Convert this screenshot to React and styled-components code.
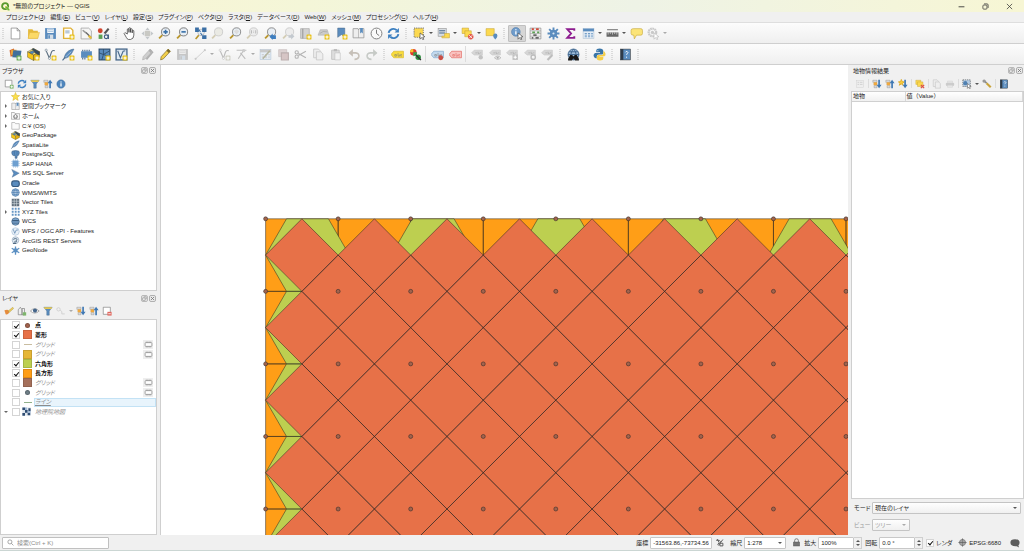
import React from "react";
import styled, { createGlobalStyle, css } from "styled-components";

const Global = createGlobalStyle`
  *, *::before, *::after { box-sizing: border-box; }
  html, body, #root { height: 100%; }
  body {
    margin: 0;
    background: #f0f0f0;
    color: #1c1c1c;
    font-family: "Liberation Sans", "Noto Sans CJK JP", sans-serif;
    font-size: 6px;
    line-height: 8px;
    font-feature-settings: "palt";
  }
  button, input, select { font: inherit; color: inherit; font-feature-settings: inherit; }
`;

/* ---------- icon drawings (24 x 24 grid) ---------- */

const BLUE = "#5a8cbe";
const DARK = "#4a6a8c";
const GREY = "#8a8a8a";
const PALE = "#c9c9c9";
const YEL = "#fcd94f";

const Plus = ({ fill = "#e9c21c" }) => (
  <g>
    <rect x="14" y="14" width="9" height="9" rx="1" fill={fill} />
    <path d="M18.5 15.5v6M15.5 18.5h6" stroke="#fff" strokeWidth="2" />
  </g>
);
const Lens = ({ c = "#666", handle = "#b9962c", fill = "#e8eef4", children }) => (
  <g>
    <path d="M8 15l-6 6" stroke={handle} strokeWidth="3.5" />
    <circle cx="14" cy="9" r="7.5" fill={fill} stroke={c} strokeWidth="1.5" />
    {children}
  </g>
);
const Label = ({ fill, stroke, ink = "#777" }) => (
  <g>
    <path d="M0 12l5-6h18v12H5z" fill={fill} stroke={stroke} strokeWidth="1.2" />
    <path d="M7 12h3v3H7zM13 9v6h3v-3M20 12h-2v3h2" fill="none" stroke={ink} strokeWidth="1" />
  </g>
);
const PaleLabel = ({ children }) => (
  <g>
    <path d="M1 9l5-5h15v9H6z" fill="#d6d6d6" stroke="#c4c4c4" />
    <path d="M8 9h3M13 7v3h3M18 10V8" fill="none" stroke="#aaa" strokeWidth="1.3" />
    {children}
  </g>
);
const Book = ({ c = BLUE }) => (
  <g>
    <rect x="3" y="2" width="18" height="20" fill={c} stroke="#333" />
    <rect x="3" y="2" width="5" height="20" fill="#2f3b48" />
  </g>
);
const Table = ({ c = BLUE }) => (
  <g>
    <rect x="2" y="3" width="20" height="18" fill="#e6eef6" stroke="#a9bdd1" />
    <path d="M2 3h20v5H2z" fill={c} />
    <path d="M5 12h4M11 12h4M17 12h3M5 15h4M11 15h4M17 15h3M5 18h4M11 18h4M17 18h3" stroke={c} strokeWidth="1.5" />
  </g>
);
const Gear = ({ c }) => (
  <g stroke={c} strokeWidth="3.5">
    <path d="M12 1v22M1 12h22M4 4l16 16M20 4L4 20" />
    <circle cx="12" cy="12" r="5" fill={c} />
    <circle cx="12" cy="12" r="2" fill="#dce8f3" stroke="none" />
  </g>
);
const Globe = ({ c = BLUE, fill = "#dfe9f2" }) => (
  <g fill="none" stroke={c} strokeWidth="1.8">
    <circle cx="12" cy="12" r="10" fill={fill} />
    <path d="M2 12h20M12 2c-6 6-6 14 0 20M12 2c6 6 6 14 0 20M4 7h16M4 17h16" />
  </g>
);
const Refresh = ({ c = "#3c7fc0" }) => (
  <g fill="none" stroke={c} strokeWidth="3.5">
    <path d="M3 11a9 9 0 0 1 15-5M21 13a9 9 0 0 1-15 5" />
    <path d="M22 2v8h-8zM2 22v-8h8z" fill={c} stroke="none" />
  </g>
);
const V = ({ c = "#5c6f80" }) => (
  <g>
    <path d="M4 5l6 14 4-12q2-3 6-2" fill="none" stroke={c} strokeWidth="2" />
    <circle cx="4" cy="4" r="2" fill="#fff" stroke={c} />
    <circle cx="10" cy="19" r="2" fill="#fff" stroke={c} />
  </g>
);
const Pencil = ({ c = YEL, s = "#7c6a2a" }) => (
  <g>
    <path d="M17 2l4 4L8 20l-5 2 1-6z" fill={c} stroke={s} strokeWidth="1.3" />
    <path d="M17 2l4 4-3 3-4-4z" fill={s} />
  </g>
);
const Feather = () => (
  <g>
    <path d="M22 2C12 3 5 10 4 19c8 0 13-6 18-17z" fill={BLUE} stroke={DARK} />
    <path d="M4 19L17 7" stroke="#dce8f3" strokeWidth="1" />
    <path d="M1 23l5-6" stroke={DARK} strokeWidth="2" />
  </g>
);
const Cube = () => (
  <g stroke="#4c4c30" strokeWidth="0.8">
    <path d="M12 1l11 6-11 6L1 7z" fill="#f7e27a" />
    <path d="M1 7l11 6v10L1 17z" fill="#f5c518" />
    <path d="M23 7l-11 6v10l11-6z" fill="#e2ad12" />
    <path d="M9 2l3-1 11 6v6l-4-1-5-4z" fill="#33495f" />
    <path d="M4 8l6-3 4 3-5 3z" fill="#4f86bd" />
  </g>
);
const Info = ({ r = 10 }) => (
  <g>
    <circle cx="12" cy="12" r={r} fill="#4f86bd" stroke="#3e6a96" />
    <path d="M12 10v8M12 6v2.5" stroke="#fff" strokeWidth="3" />
  </g>
);
const Collapse = ({ up }) => (
  <g>
    <path d="M2 3h10v5H2zM5 9h7v5H5zM5 16h7v5H5z" fill="#ddd" stroke="#8b8b8b" />
    <path d="M4 8h8v7H4z" fill="#f2a93c" />
    {up ? (
      <path d="M17 2l6 8h-4v12h-4V10h-4z" fill="#3f78b3" />
    ) : (
      <path d="M17 22l6-8h-4V2h-4v12h-4z" fill="#3f78b3" />
    )}
  </g>
);
const Cursor = ({ c = "#444" }) => <path d="M13 11l9 7-4 .5 2 4-2 1-2-4-3 3z" fill="#fff" stroke={c} strokeWidth="1.2" />;
const Sheet = ({ c = "#777" }) => <path d="M4 2h11l5 5v15H4zM15 2v5h5" fill="#fff" stroke={c} strokeWidth="1.2" />;
const Floppy = ({ c = BLUE, p = "#fff" }) => (
  <g>
    <path d="M2 2h20v20H2z" fill={c} />
    <path d="M6 3h12v8H6z" fill={p} />
    <path d="M7 5h10M7 8h10" stroke={c} />
    <path d="M7 14h10v8H7z" fill="#d4dde6" />
    <path d="M8 15h3v6H8z" fill={c} />
  </g>
);
const Funnel = () => (
  <g>
    <path d="M2 3h20l-7 9v10H9V12z" fill={BLUE} stroke={DARK} />
    <path d="M2 3h20l-2 4H4z" fill="#e8c850" />
  </g>
);

const art = {
  new: <Sheet />,
  open: <g><path d="M2 4h8l2 3h8v14H2z" fill="#e4b93c" /><path d="M5 10h18l-3 11H2z" fill="#fbd966" stroke="#e0b440" /></g>,
  save: <Floppy />,
  layoutNew: <g><path d="M3 2h13l4 4v15H3z" fill="#fff" stroke="#e0b23a" strokeWidth="2.5" /><path d="M6 6h8v6H6z" fill="#b9c9d8" /><Plus /></g>,
  layouts: <g><path d="M2 2h14l5 5v15H2z" fill="#f5f5f5" stroke="#999" strokeWidth="1.3" /><path d="M5 6l6 5" stroke="#999" strokeWidth="3" /><path d="M11 10l9 9" stroke="#666" strokeWidth="2.5" /><path d="M16 16l5 5" stroke="#e3bc3c" strokeWidth="4" /></g>,
  style: <g><circle cx="6" cy="7" r="4.5" fill="#d0452f" /><path d="M12 11l8-9 3 2-7 9z" fill="#555" /><rect x="3" y="14" width="7" height="8" fill="#5aa055" /><circle cx="17" cy="18" r="3.5" fill="none" stroke="#3c5a80" strokeWidth="2" /><path d="M21 14v8" stroke="#3c5a80" strokeWidth="2" /></g>,
  hand: <path d="M8 13V4q1.500-2 3 0v6-8q1.500-1.500 3 0v8-6q1.500-1.500 3 0v7-4q1.500-1.500 3 0v8q0 7-6 8h-4q-3-1-4-4L2 12q1-2 3-1z" fill="#fff" stroke="#333" strokeWidth="1.3" />,
  panSel: <g fill="#c3c7ca"><path d="M12 1l4 5H8zM12 23l4-5H8zM1 12l5-4v8zM23 12l-5-4v8z" /><rect x="7" y="7" width="10" height="10" fill="#c9c9c4" /></g>,
  zoomIn: <Lens><path d="M14 5v8M10 9h8" stroke="#3870a8" strokeWidth="3" /></Lens>,
  zoomOut: <Lens><path d="M10 9h8" stroke="#3870a8" strokeWidth="3" /></Lens>,
  zoomFull: <g><path d="M9 15l-6 7" stroke="#b9962c" strokeWidth="3" /><circle cx="13" cy="10" r="6" fill="#e8eef4" stroke="#999" /><path d="M2 1h7v8H2zM15 1h8v8h-8zM15 15h8v7h-8z" fill="#3b6fa5" /><path d="M9 5l3 4M15 15l-3-4" stroke="#3b6fa5" strokeWidth="2" /></g>,
  zoomSel: <Lens c="#c6c6c6" handle="#d4cdb4" fill="#eaeae4" />,
  zoomLayer: <Lens c="#777"><path d="M9 8l5-4 5 4-5 6z" fill="#ddd" /></Lens>,
  zoomNative: <Lens c="#c6c6c6" handle="#d4cdb4" fill="#ececec"><path d="M10 6v6M14 7v1M14 10v1M18 6v6" stroke="#aaa" strokeWidth="1.5" /></Lens>,
  zoomLast: <g><Lens c="#777" /><path d="M22 12v10h-6v2l-6-6 6-6v3h6z" fill="#3f7fc0" /></g>,
  zoomNext: <g><Lens c="#c9c9c9" handle="#d4cdb4" fill="#ececec" /><path d="M12 15h5v-3l6 5-6 6v-3h-5z" fill="#c3c9cf" /></g>,
  mapView: <g><path d="M3 3h16v18H3z" fill="#d2d2d2" stroke="#999" /><path d="M7 3v18" stroke="#999" strokeWidth="2" /><Plus /></g>,
  map3d: <g><path d="M6 5h13l3 10H2z" fill="#ccc" stroke="#aaa" /><path d="M5 12q6-6 14-3" fill="none" stroke="#999" /><Plus /></g>,
  bookmarkNew: <g><path d="M5 2h13v17l-6-5-7 5z" fill={BLUE} stroke={DARK} /><Plus /></g>,
  bookmarks: <g><path d="M2 3h9l1 2 1-2h9v17H2z" fill="#eee" stroke="#999" strokeWidth="1.5" /><path d="M12 4v16" stroke="#999" /><path d="M15 2h5v10l-2.5-2.5L15 12z" fill={BLUE} /></g>,
  clock: <g><circle cx="12" cy="12" r="10" fill="#fafafa" stroke="#808080" strokeWidth="1.8" /><path d="M12 5v7l5 4" fill="none" stroke="#777" strokeWidth="1.8" /></g>,
  refresh: <Refresh />,
  select: <g><path d="M2 2h17v17H2z" fill={YEL} stroke="#777" strokeDasharray="2 2" strokeWidth="2" /><Cursor /></g>,
  selectValue: <g><rect x="2" y="3" width="15" height="14" fill="#d8dde2" stroke="#888" /><path d="M4 7h11M4 11h11" stroke={DARK} strokeWidth="2" /><path d="M14 12h9v8H9v-3h5z" fill={YEL} stroke="#c4a233" /></g>,
  deselect: <g><path d="M2 2h12v10H2z" fill={YEL} stroke="#c4a233" /><path d="M7 7h12v11H7z" fill={YEL} stroke="#c4a233" /><circle cx="18" cy="18" r="5" fill="#e2574c" /><path d="M15 15l6 6M21 15l-6 6" stroke="#fff" strokeWidth="1.5" /></g>,
  selectLoc: <g><path d="M2 3h15v13H2z" fill={YEL} stroke="#c4a233" /><path d="M19 12q4 0 4 4 0 3-4 7-4-4-4-7 0-4 4-4z" fill={BLUE} /></g>,
  identify: <g><circle cx="9" cy="9" r="8" fill="#6f9ccb" stroke="#4a78a8" /><path d="M9 8v6M9 4v2" stroke="#fff" strokeWidth="2.5" /><Cursor /></g>,
  calc: <g><path d="M2 2h20v20H2z" fill="#eee" stroke="#888" strokeWidth="1.2" /><path d="M2 7h20M2 12h20M2 17h20" stroke="#999" /><path d="M5 4h4M13 4h5" stroke="#d04a3a" strokeWidth="3" /><path d="M6 10h5M15 10h4" stroke="#59a052" strokeWidth="3" /><path d="M5 20h3M12 20h6M8 15h6" stroke="#666" strokeWidth="3" /></g>,
  gear: <Gear c={BLUE} />,
  sigma: <path d="M19 7V4H6l7 8-7 8h13v-3" fill="none" stroke="#8d1c8f" strokeWidth="3.5" />,
  table: <Table />,
  measure: <g><path d="M2 5h20" stroke="#777" strokeWidth="2" /><rect x="1" y="10" width="22" height="8" fill="#666" /><path d="M4 10v4M8 10v3M12 10v4M16 10v3M20 10v4" stroke="#fff" /></g>,
  tips: <path d="M6 3h14q3 0 3 3v6q0 3-3 3h-8l-4 7-1-7H6q-4 0-4-3V6q0-3 4-3z" fill="#fbe478" stroke="#c9aa3c" strokeWidth="1.2" />,
  action: <g><circle cx="10" cy="10" r="7" fill="none" stroke={PALE} strokeWidth="4" strokeDasharray="3 1" /><circle cx="10" cy="10" r="3" fill={PALE} /><Cursor c="#bbb" /></g>,
  source: <g><path d="M1 4l8-3 3 12-9 3z" fill="#d1662f" /><path d="M4 3l10 0-2 12-9-3z" fill="#e8a33c" /><path d="M8 4l15 1-2 13-15-1z" fill="#416f9c" /><Plus fill="#6fae5a" /></g>,
  gpkg: <g><Cube /><Plus /></g>,
  shp: <g><V /><Plus /></g>,
  spatial: <g><Feather /><Plus /></g>,
  memory: <g><rect x="2" y="6" width="20" height="12" fill={BLUE} /><path d="M5 3v3M9 3v3M13 3v3M17 3v3M5 18v3M9 18v3" stroke={DARK} strokeWidth="2" /><Plus /></g>,
  mesh: <g><rect x="2" y="2" width="20" height="20" fill={BLUE} stroke="#2c4a68" strokeWidth="2" /><path d="M2 9l8 3 12-7M10 12l-3 10M10 12l12 4M10 2v10" fill="none" stroke="#2c4a68" strokeWidth="1.5" /><Plus /></g>,
  virtual: <g><rect x="2" y="2" width="20" height="20" fill="#dfe9f2" stroke={DARK} strokeWidth="2.5" /><path d="M5 5l5 13 5-12 4-1" fill="none" stroke={DARK} strokeWidth="2" /><Plus /></g>,
  edits: <g><Pencil c="#cfcfcf" s="#b0b0b0" /><path d="M10 21l12-14" stroke="#b0b0b0" strokeWidth="3" /></g>,
  edit: <Pencil c="#f3d04a" />,
  saveEdit: <Floppy c="#c6c6c6" p="#eee" />,
  line: <g><path d="M3 20L20 4" stroke={PALE} strokeWidth="1.5" /><circle cx="3" cy="20" r="2" fill={PALE} /><circle cx="20" cy="4" r="2" fill={PALE} /></g>,
  addFeat: <g><V c="#bbb" /><Plus fill="#d2d2c8" /></g>,
  vertex: <g><path d="M3 4h18M6 20L16 4M10 9l9 11" stroke="#bdbdbd" strokeWidth="2" fill="none" /><circle cx="16" cy="5" r="3" fill="#ccc" /></g>,
  attrs: <g><Table c="#c9c9c9" /><path d="M7 20L20 5" stroke="#b5b59f" strokeWidth="3" /></g>,
  trash: <g><path d="M3 3h15v13H3z" fill="#dcd2d2" stroke="#c0b6b6" /><path d="M8 9h13v13H8z" fill="#d6c5c5" stroke="#bbaeae" strokeWidth="2" /></g>,
  cut: <g stroke="#b4b4b4" strokeWidth="2" fill="none"><path d="M22 6L8 14M22 18L8 10" /><circle cx="5" cy="8" r="3" /><circle cx="5" cy="16" r="3" /></g>,
  copy: <g><path d="M3 2h9l4 4v12H3z" fill="#eee" stroke="#c6c6c6" strokeWidth="1.5" /><path d="M8 7h8l4 4v11H8z" fill="#eee" stroke="#c6c6c6" strokeWidth="1.5" /></g>,
  paste: <g><path d="M3 4h14v17H3z" fill="#ddd" stroke="#c2c2c2" strokeWidth="1.5" /><path d="M9 9h10v13H9z" fill="#f3f3f3" stroke="#bbb" /><path d="M7 2h6v4H7z" fill="#bbb" /></g>,
  undo: <g><path d="M3 9h11q7 1 6 7-1 5-8 5" fill="none" stroke="#c6c0b8" strokeWidth="3" /><path d="M1 9l8-7v14z" fill="#c6c0b8" /></g>,
  redo: <g><path d="M21 9H10q-7 1-6 7 1 5 8 5" fill="none" stroke="#c6cac6" strokeWidth="3" /><path d="M23 9l-8-7v14z" fill="#c6cac6" /></g>,
  label: <Label fill="#f9dc3c" stroke="#d8b728" />,
  diagram: <g><circle cx="8" cy="8" r="6" fill="#e03a2e" /><path d="M8 8V2a6 6 0 0 0-6 6z" fill="#f4c82b" /><path d="M8 8h7a7 7 0 0 1-7 7z" fill="#36a04a" /><circle cx="17" cy="17" r="5" fill="#2e8f3f" /><path d="M12 12l10 10" stroke="#333" strokeWidth="2.5" /></g>,
  labelPin: <g><Label fill="#c3d9ee" stroke="#7aa3cb" /><circle cx="18" cy="18" r="4.5" fill="#c94e45" /></g>,
  labelRed: <Label fill="#f9c3c0" stroke="#e2605a" ink="#e2605a" />,
  pl1: <PaleLabel><circle cx="18" cy="17" r="4" fill="#c2c2c2" /></PaleLabel>,
  pl2: <PaleLabel><path d="M10 18q6-6 12 0-6 6-12 0z" fill="#eee" stroke="#b5b5b5" strokeWidth="1.5" /><circle cx="16" cy="18" r="2" fill="#aaa" /></PaleLabel>,
  pl3: <PaleLabel><rect x="12" y="12" width="10" height="10" fill="#c2c2c2" /><path d="M17 14v6M14 17h6" stroke="#fff" strokeWidth="2" /></PaleLabel>,
  pl4: <PaleLabel><circle cx="17" cy="17" r="4" fill="none" stroke="#bcbcbc" strokeWidth="2.5" /></PaleLabel>,
  pl5: <PaleLabel><path d="M12 22l9-9" stroke="#bdbdbd" strokeWidth="4" /></PaleLabel>,
  metasearch: <g><Globe c="#41678e" fill="#9dbbd8" /><path d="M6 13h4l1 2h2l1-2h4l4 7v3h-7l-2-3h-2l-2 3H2v-3z" fill="#181818" /></g>,
  python: <g><path d="M12 1q-6 0-6 4v3h7v1H4q-3 1-3 5t4 5h2v-4q0-3 4-3h5q3 0 3-3V6q0-5-7-5z" fill="#3a76a8" /><path d="M13 23q6 0 6-4v-3h-7v-1h9q3-1 2-5-1-4-4-4v4q0 3-4 3h-5q-3 0-3 3v3q0 4 6 4z" fill="#f6ce46" /><circle cx="9" cy="5" r="1" fill="#fff" /></g>,
  help: <g><Book /><path d="M12 8q1-2 3-1.500 3 1.500 0 4l-1 2M14 16v2" fill="none" stroke="#fff" strokeWidth="1.8" /></g>,
  addLayer: <g><path d="M3 3h16v16H3z" fill="#fff" stroke="#777" strokeWidth="1.5" /><rect x="14" y="14" width="9" height="9" fill="#7db56c" /><path d="M18.5 15.5v6M15.5 18.5h6" stroke="#fff" strokeWidth="2" /></g>,
  funnel: <Funnel />,
  collapse: <Collapse up />,
  expand: <Collapse />,
  info: <Info />,
  star: <path d="M12 1l3 8 8 .5-6 5 2 8-7-4.5-7 4.5 2-8-6-5L9 9z" fill="#fbe04a" stroke="#d1a820" strokeWidth="1.2" />,
  home: <g><path d="M1 4h8l2 3h12v15H1z" fill="#f7f7f7" stroke="#888" strokeWidth="1.5" /><path d="M6 14l6-5 6 5M8 13v6h8v-6" fill="none" stroke="#555" strokeWidth="2" /></g>,
  folder: <path d="M2 4h8l2 3h10v15H2z" fill="#fbfbfb" stroke="#999" strokeWidth="1.5" />,
  cube: <Cube />,
  feather: <Feather />,
  pg: <g><path d="M3 3q9-3 18 0 3 4-1 11l-4 2v6h-5v-7q-6 1-8-3-2-5 0-9z" fill={BLUE} stroke="#365a80" strokeWidth="1.5" /><path d="M9 3v10M16 4v10" stroke="#365a80" /></g>,
  hana: <g><rect x="4" y="4" width="16" height="16" fill="#6d9fd0" /><path d="M7 1v22M12 1v22M17 1v22M1 7h22M1 12h22M1 17h22" stroke="#6d9fd0" strokeWidth="1.5" strokeDasharray="3 16" /></g>,
  mssql: <path d="M2 1l20 10L3 22l4-10z" fill={BLUE} stroke={DARK} />,
  oracle: <rect x="2" y="5" width="20" height="15" rx="6" fill={BLUE} stroke="#365a80" strokeWidth="3" />,
  wms: <Globe c="#4a7cae" fill="#b4cbe2" />,
  vtiles: <g><rect x="2" y="2" width="20" height="20" fill="#5f6d7b" /><path d="M2 8.500h20M2 15h20M8.500 2v20M15 2v20" stroke="#dde4ea" strokeWidth="1.5" /></g>,
  xyz: <path d="M2 2h5v5H2zM10 2h5v5h-5zM18 2h5v5h-5zM2 10h5v5H2zM10 10h5v5h-5zM18 10h5v5h-5zM2 18h5v5H2zM10 18h5v5h-5zM18 18h5v5h-5z" fill="#6595c4" />,
  wcs: <g><circle cx="12" cy="12" r="10" fill="#7ba3cb" stroke="#4d6e90" strokeWidth="2" /><path d="M3 8h18v3H3zM3 15h18v2H3z" fill="#3d5e80" /></g>,
  wfs: <g><circle cx="12" cy="12" r="10" fill="#eaf1f8" stroke="#9fb9d3" strokeWidth="1.5" /><path d="M6 6l4 11 4-9h5" fill="none" stroke="#5d86af" strokeWidth="2" /></g>,
  arcgis: <g><circle cx="12" cy="11" r="9" fill="#dfe8f1" stroke="#9db0c4" strokeWidth="2" /><path d="M6 9q6-5 11 0M5 20h9M14 10v6H8" stroke="#4b6680" strokeWidth="2.5" fill="none" /></g>,
  geonode: <g stroke="#5b8fc2" strokeWidth="3.5"><path d="M12 1v22M2 6l20 12M22 6L2 18" /><circle cx="12" cy="12" r="4" fill="#5b8fc2" /></g>,
  brush: <g><path d="M1 10q8-2 10 0l2 5q-4 7-9 5z" fill="#e58c3d" /><path d="M10 12L21 3l2 3-10 9z" fill="#f0cf58" stroke="#a08a3a" /></g>,
  addGroup: <g><path d="M3 21V9l5-6 4 6v12zM12 21V6h6v15z" fill="#eee" stroke="#777" strokeWidth="1.5" /><rect x="14" y="15" width="8" height="8" fill="#7db56c" /></g>,
  eye: <g><path d="M1 12q10-11 21 0-11 10-21 0z" fill="#fff" stroke="#999" strokeWidth="2" /><circle cx="12" cy="11" r="5" fill="#44658a" /></g>,
  expr: <g><circle cx="6" cy="8" r="4" fill="none" stroke="#ccc" strokeWidth="2" /><path d="M10 10q6 2 4 9h7" fill="none" stroke="#ccc" strokeWidth="2" /></g>,
  remove: <g><path d="M3 3h17v17H3z" fill="#fff" stroke="#777" strokeWidth="1.5" /><rect x="13" y="14" width="10" height="9" fill="#e0675e" /><path d="M15 18.500h6" stroke="#fff" strokeWidth="2" /></g>,
  form: <g><rect x="3" y="3" width="18" height="18" fill="#eee" stroke="#ccc" /><path d="M6 8h4M6 13h4M12 8h6M12 13h6" stroke="#ccc" strokeWidth="2" /></g>,
  expandNew: <g><path d="M8 1l2 5 5 1-4 3 1 5-4-3-5 3 2-5-4-3 5-1z" fill="#f8cb3a" stroke="#dba928" strokeWidth="2" /><path d="M17 22l6-8h-4V2h-4v12h-4z" fill="#3f78b3" /></g>,
  clear: <g><path d="M2 3h12v10H2z" fill={YEL} stroke="#c4a233" /><path d="M6 7h13v11H6z" fill={YEL} stroke="#c4a233" /><path d="M14 14l8 8M22 14l-8 8" stroke="#dd5248" strokeWidth="3" /></g>,
  printer: <g><rect x="2" y="9" width="20" height="8" rx="3" fill="#ccc" /><path d="M6 5h12v4H6zM6 15h12v5H6z" fill="#e9e9e9" stroke="#ccc" /></g>,
  idMode: <g><path d="M2 2h18v16H2z" fill="#b3cbe3" stroke="#777" strokeWidth="2" strokeDasharray="3 2" /><circle cx="8" cy="10" r="5" fill="#4f80b1" /><Cursor /></g>,
  wrench: <g><path d="M4 3l7 7" stroke="#888" strokeWidth="4" /><circle cx="5" cy="5" r="4" fill="#999" /><path d="M11 10l10 10" stroke="#c9a339" strokeWidth="5" /></g>,
  extents: <g stroke="#555" strokeWidth="2.5" fill="none"><path d="M3 6h8l4 4M6 3l5 9-4 6M21 4L9 20M13 14h8v7h-8z" /></g>,
  lock: <g><path d="M7 11V7q0-5 5-5t5 5v4" fill="none" stroke="#777" strokeWidth="2.5" /><rect x="3" y="10" width="18" height="12" rx="1" fill="#666" /><path d="M3 14h18M3 18h18" stroke="#999" /></g>,
  crs: <g><circle cx="12" cy="12" r="8" fill="#999" stroke="#666" strokeWidth="2" /><path d="M1 12h22M12 1v22" stroke="#666" strokeWidth="2" /><path d="M5 8h14M5 16h14" stroke="#ddd" /></g>,
  bubble: <path d="M12 3q11 0 11 8 0 5-3 7l2 5-6-3q-15 1-15-9 0-8 11-8z" fill="#5b5b5b" />,
  magnifier: <g fill="none" stroke="#888" strokeWidth="2.5"><circle cx="10" cy="10" r="7" /><path d="M15 15l7 7" /></g>,
  chip: <g><rect x="3" y="7" width="18" height="10" rx="2" fill="#fff" stroke={GREY} strokeWidth="2" /><path d="M6 4v3M10 4v3M14 4v3M18 4v3M6 17v3M10 17v3M14 17v3M18 17v3" stroke={GREY} strokeWidth="1.5" /></g>,
  raster: <g><rect x="1" y="1" width="22" height="22" fill="#dfe6ee" /><path d="M1 1h7v7H1zM8 8h7v7H8zM17 3h6v8h-6zM1 16h7v7H1zM15 15h7v7h-7z" fill="#2f4d73" /><path d="M8 1h5v7H8zM15 11h8v4h-8z" fill="#9db8d6" /></g>,
  qgis: <g><circle cx="11" cy="11" r="8" fill="none" stroke="#5a9a2c" strokeWidth="5" /><path d="M11 11h5l7 8v4h-4l-8-8z" fill="#6fb52f" stroke="#fff" /><path d="M11 11h4l-4 4z" fill="#f0c020" /></g>,
  undock: <g fill="none" stroke="#888" strokeWidth="2"><rect x="2" y="2" width="20" height="20" rx="4" /><rect x="6" y="10" width="8" height="8" /><path d="M10 9V6h8v8h-3" /></g>,
  closeBox: <g fill="none" stroke="#777" strokeWidth="2"><rect x="2" y="2" width="20" height="20" rx="4" /><path d="M7 7l10 10M17 7L7 17" strokeWidth="3" /></g>,
  winMin: <path d="M2 13h20" stroke="#333" strokeWidth="3" />,
  winMax: <g fill="none" stroke="#333" strokeWidth="2.5"><rect x="3" y="7" width="14" height="14" rx="3" /><path d="M7 3h10q4 0 4 4v10" /></g>,
  winClose: <path d="M3 3l18 18M21 3L3 21" stroke="#333" strokeWidth="2.5" />,
};

const Svg = styled.svg`
  display: block;
  flex: none;
  width: ${(p) => p.$s}px;
  height: ${(p) => p.$s}px;
`;
const Icon = ({ name, size = 13 }) => (
  <Svg $s={size} viewBox="0 0 24 24" aria-hidden="true">{art[name]}</Svg>
);

/* ---------- window frame ---------- */

const Window = styled.div`
  display: flex;
  flex-direction: column;
  height: 100vh;
  overflow: hidden;
  background: #f0f0f0;
  border-bottom: 1px solid #cbd6d3;
`;
const TitleBar = styled.header`
  display: flex;
  align-items: center;
  flex: none;
  gap: 3px;
  height: 12px;
  padding: 0 9px 0 1px;
  background: linear-gradient(90deg, #faf5d4, #f4f6d8 30%, #eef3e6 62%, #f7f6d4);
`;
const Title = styled.h1`
  flex: 1;
  margin: 0;
  font-size: 6px;
  font-weight: 400;
`;
const BareButton = styled.button`
  display: grid;
  place-items: center;
  padding: 0;
  border: 0;
  background: none;
`;
const WindowButtons = styled.div`
  display: flex;
  gap: 12px;
  ${BareButton} { width: 12px; height: 12px; }
`;
const MenuBar = styled.nav`
  display: flex;
  align-items: center;
  flex: none;
  gap: 1px;
  height: 11px;
  padding: 0 4px;
  background: #f0f0f0;
  border-bottom: 1px solid #dedede;
`;
const MenuItem = styled.button`
  padding: 0 2px;
  border: 0;
  background: none;
  line-height: 9px;
  white-space: nowrap;
`;

/* ---------- tool bars ---------- */

const ToolBar = styled.div`
  display: flex;
  align-items: center;
  flex: none;
  height: 21px;
  background: linear-gradient(#fcfcfc, #efefef);
  border-bottom: 1px solid #cfcfcf;
`;
const Handle = styled.span`
  display: grid;
  place-items: center;
  flex: none;
  width: 8px;
  height: 13px;
  &:first-child { width: 6px; }
  &::before {
    content: "";
    width: 2px;
    height: 11px;
    background: repeating-linear-gradient(#dadada 0 1px, transparent 1px 2px);
  }
`;
const Divider = styled.span`
  flex: none;
  width: 1px;
  height: ${(p) => (p.$small ? 9 : 16)}px;
  margin: 0 ${(p) => (p.$small ? 0 : 2)}px;
  background: #dcdcdc;
`;
const Group = styled.div`
  display: flex;
  align-items: center;
  flex: none;
  width: ${(p) => p.$w}px;
`;
const ToolButton = styled.button`
  display: flex;
  align-items: center;
  gap: 3px;
  flex: 0 1 ${(p) => (p.$menu ? 24 : 18)}px;
  min-width: 0;
  height: 17px;
  padding: 0 2px;
  border: 1px solid transparent;
  background: none;
  ${(p) => p.$on && css`
    border-color: #c0c0c0;
    background: #d6d6d6;
    border-radius: 1px;
  `}
`;
const Caret = styled.span`
  flex: none;
  border: 2px solid transparent;
  border-top-color: ${(p) => (p.$pale ? "#aaa" : "#555")};
  border-bottom: 0;
`;
const Tools = ({ width, items }) => (
  <Group $w={width}>
    {items.map((it) => {
      const menu = it.endsWith("+");
      const name = it.replace("+", "");
      return (
        <ToolButton key={name} type="button" aria-label={name} $menu={menu} $on={name === "identify"}>
          <Icon name={name} size={13} />
          {menu && <Caret $pale={["line", "vertex", "action"].includes(name)} />}
        </ToolButton>
      );
    })}
  </Group>
);

/* ---------- docks ---------- */

const Workspace = styled.main`
  display: grid;
  grid-template-columns: 157px minmax(0, 1fr) 173px;
  gap: 3px;
  flex: 1;
  min-height: 0;
`;
const Dock = styled.aside`
  display: flex;
  flex-direction: column;
  min-width: 0;
  min-height: 0;
`;
const Panel = styled.section`
  display: flex;
  flex-direction: column;
  min-height: 0;
  flex: ${(p) => p.$grow} ${(p) => p.$grow} 0;
  padding: ${(p) => p.$top || 0}px 0 ${(p) => p.$bottom || 0}px;
`;
const PanelHead = styled.div`
  display: flex;
  align-items: center;
  flex: none;
  gap: 1px;
  height: 11px;
  padding: 0 1px 0 2px;
`;
const PanelTitle = styled.h2`
  flex: 1;
  margin: 0;
  font-size: 6px;
  font-weight: 400;
`;
const PanelTools = styled.div`
  display: flex;
  align-items: center;
  flex: none;
  gap: 3px;
  height: 15px;
  padding-left: 4px;
`;
const Header = ({ title }) => (
  <PanelHead>
    <PanelTitle>{title}</PanelTitle>
    <BareButton type="button" aria-label="undock"><Icon name="undock" size={7} /></BareButton>
    <BareButton type="button" aria-label="close"><Icon name="closeBox" size={7} /></BareButton>
  </PanelHead>
);
const SmallTool = ({ name }) => (
  <BareButton type="button" aria-label={name}><Icon name={name} size={10} /></BareButton>
);
const Box = styled.div`
  flex: 1;
  min-height: 0;
  border: 1px solid #cfcfcf;
  background: #fff;
  overflow: hidden;
`;
const TreeList = styled.ul`
  display: grid;
  grid-auto-rows: 1fr;
  height: ${(p) => p.$h}px;
  margin: ${(p) => p.$top || 0}px 0 0;
  padding: 0;
  list-style: none;
`;
const BrowserRow = styled.li`
  display: grid;
  grid-template-columns: 7px 9px 1fr;
  column-gap: 2px;
  align-items: center;
  padding-left: 1px;
`;
const Twist = styled.span`
  justify-self: center;
  border: 2px solid transparent;
  ${(p) => p.$open
    ? css`border-top-color: #666; border-bottom: 0;`
    : css`border-left-color: #666; border-right: 0;`}
  visibility: ${(p) => (p.$show ? "visible" : "hidden")};
`;
const LayerRow = styled.li`
  display: grid;
  grid-template-columns: 10px 9px 11px 1fr;
  column-gap: 1px;
  align-items: center;
  min-height: 0;
`;
const Tick = styled.input`
  appearance: none;
  display: grid;
  place-items: center;
  width: 8px;
  height: 8px;
  margin: 0;
  border: 1px solid #d4d4d4;
  background: #fff;
  &:checked::after {
    content: "";
    width: 3px;
    height: 5px;
    border: solid #111;
    border-width: 0 1px 1px 0;
    transform: rotate(40deg);
  }
`;
const Swatch = styled.span`
  justify-self: center;
  ${(p) => p.$kind === "fill" && css`width: 9px; height: 9px; background: ${p.$c}; border: 1px solid rgba(0,0,0,.12);`}
  ${(p) => p.$kind === "line" && css`width: 8px; height: 1px; background: ${p.$c};`}
  ${(p) => p.$kind === "dot" && css`width: 5px; height: 5px; border-radius: 50%; background: ${p.$c}; border: 1px solid rgba(0,0,0,.2);`}
`;
const LayerLabel = styled.label`
  display: flex;
  align-items: center;
  justify-content: space-between;
  height: 9px;
  padding: 0 3px 0 1px;
  color: ${(p) => (p.$on ? "#111" : "#8c8c8c")};
  font-weight: ${(p) => (p.$on ? 700 : 400)};
  font-style: ${(p) => (p.$on ? "normal" : "italic")};
  ${(p) => p.$sel && css`
    background: #e8f4fc;
    outline: 1px solid #c3e2f5;
    outline-offset: -1px;
    text-decoration: underline;
  `}
`;
const Chip = styled.span`
  display: grid;
  place-items: center;
  width: 10px;
  height: 9px;
  background: #eeeeee;
`;

const AttrTable = styled.table`
  width: 100%;
  table-layout: fixed;
  border-collapse: collapse;
  font-feature-settings: normal;
  th {
    height: 9px;
    padding: 0 0 0 1px;
    border-right: 1px solid #d8d8d8;
    border-bottom: 1px solid #d0d0d0;
    background: linear-gradient(#fff, #f1f1f1);
    font-weight: 400;
    line-height: 8px;
    text-align: left;
  }
  th:first-child { width: 53px; }
`;
const FormRow = styled.div`
  display: flex;
  align-items: center;
  flex: none;
  gap: 2px;
  height: 17px;
  padding: 0 3px;
  color: ${(p) => (p.$pale ? "#999" : "inherit")};
  label { width: 16px; white-space: nowrap; }
`;
const SelectWrap = styled.div`
  display: flex;
  position: relative;
  flex: ${(p) => (p.$w ? "none" : 1)};
  width: ${(p) => (p.$w ? p.$w + "px" : "auto")};
  height: 12px;
  select {
    appearance: none;
    width: 100%;
    padding: 0 8px 0 2px;
    border: 1px solid #c4c4c4;
    border-radius: 1px;
    background: ${(p) => (p.$white ? "#fff" : "linear-gradient(#fefefe, #f0f0f0)")};
    line-height: 8px;
    opacity: 1;
  }
  ${Caret} { position: absolute; right: 4px; top: 5px; }
`;
const Select = ({ id, value, width, white, disabled }) => (
  <SelectWrap $w={width} $white={white}>
    <select id={id} disabled={disabled} defaultValue={value}><option>{value}</option></select>
    <Caret $pale={disabled} />
  </SelectWrap>
);

/* ---------- status bar ---------- */

const StatusBar = styled.footer`
  display: flex;
  align-items: center;
  flex: none;
  height: 15px;
  padding: 0 4px 0 2px;
  line-height: 8px;
  white-space: nowrap;
`;
const Field = styled.input`
  min-width: 0;
  height: 12px;
  padding: 0 2px;
  border: 1px solid #c8c8c8;
  border-radius: 1px;
  background: #fff;
  line-height: 8px;
  width: ${(p) => p.$w}px;
`;
const Search = styled.label`
  display: flex;
  align-items: center;
  gap: 3px;
  width: 107px;
  height: 12px;
  margin-right: auto;
  padding-left: 4px;
  border: 1px solid #c0c0c0;
  border-radius: 1px;
  background: #fff;
  input {
    flex: 1;
    min-width: 0;
    padding: 0;
    border: 0;
    outline: 0;
    background: none;
  }
  input::placeholder { color: #8a8a8a; }
`;
const Pair = styled.div`
  display: flex;
  align-items: center;
  gap: 2px;
  margin-right: ${(p) => p.$mr}px;
`;
const SpinBox = styled.div`
  display: flex;
  align-items: center;
  width: 44px;
  ${Field} { flex: 1; }
`;
const Arrows = styled.span`
  display: grid;
  place-content: center;
  gap: 2px;
  width: 8px;
  height: 12px;
  border: 1px solid #cfcfcf;
  border-left: 0;
`;
const UpCaret = styled.span`
  border: 2px solid transparent;
  border-bottom-color: #555;
  border-top: 0;
`;
const Spin = ({ id, value }) => (
  <SpinBox>
    <Field id={id} defaultValue={value} />
    <Arrows><UpCaret /><Caret /></Arrows>
  </SpinBox>
);

/* ---------- map canvas ---------- */

const Canvas = styled.div`
  min-width: 0;
  min-height: 0;
  background: #fff;
  border: solid #cfcfcf;
  border-width: 0 0 0 1px;
  overflow: hidden;
  svg { display: block; width: 100%; height: 100%; }
`;

const STEP = 72.55;
const OX = 104.6;
const OY = 153.8;
const COLS = 30;
const ROWS = 20;
const range = (n) => Array.from({ length: n }, (_, i) => i);
const poly = (pts) => "M" + pts.map((p) => p.map((v) => v.toFixed(2)).join(" ")).join("L") + "z";

const rectPath = range(COLS)
  .flatMap((i) => range(ROWS).map((j) => {
    const x = OX + i * STEP;
    const y = OY + j * STEP;
    return poly([[x, y], [x + STEP, y], [x + STEP, y + STEP], [x, y + STEP]]);
  }))
  .join("");

const SIDE = STEP / Math.sqrt(3);
const hexPath = range(COLS)
  .flatMap((i) => range(ROWS).map((j) => {
    const cx = OX + SIDE + i * SIDE * 1.5;
    const cy = OY + (j + (i % 2 ? 1 : 0.5)) * STEP;
    const h = STEP / 2;
    return poly([
      [cx - SIDE, cy], [cx - SIDE / 2, cy - h], [cx + SIDE / 2, cy - h],
      [cx + SIDE, cy], [cx + SIDE / 2, cy + h], [cx - SIDE / 2, cy + h],
    ]);
  }))
  .join("");

const diamondPath = range(COLS * 2)
  .flatMap((i) => range(ROWS).map((j) => {
    const h = STEP / 2;
    const cx = OX + h + i * h;
    const cy = OY + h + j * STEP + (i % 2 ? h : 0);
    return poly([[cx, cy - h], [cx + h, cy], [cx, cy + h], [cx - h, cy]]);
  }))
  .join("");

const MapView = () => (
  <Canvas>
    <svg role="img" aria-label="map">
      <g stroke="#232323" strokeOpacity="0.55" strokeWidth="0.9">
        <path d={rectPath} fill="#ff9e17" />
        <path d={hexPath} fill="#bdcf50" />
        <path d={diamondPath} fill="#e77148" />
        <g fill="#a2634d">
          {range(COLS).flatMap((i) => range(ROWS).map((j) => (
            <circle key={`${i}-${j}`} cx={OX + i * STEP} cy={OY + j * STEP} r="2" />
          )))}
        </g>
      </g>
    </svg>
  </Canvas>
);

/* ---------- content ---------- */

const menus = [
  ["プロジェクト", "J"], ["編集", "E"], ["ビュー", "V"], ["レイヤ", "L"], ["設定", "S"],
  ["プラグイン", "P"], ["ベクタ", "O"], ["ラスタ", "R"], ["データベース", "D"], ["Web", "W"],
  ["メッシュ", "M"], ["プロセシング", "C"], ["ヘルプ", "H"],
];
const browser = [
  ["star", "お気に入り"], ["bookmarks", "空間ブックマーク", 1], ["home", "ホーム", 1], ["folder", "C:¥ (OS)", 1],
  ["cube", "GeoPackage"], ["feather", "SpatiaLite"], ["pg", "PostgreSQL"], ["hana", "SAP HANA"],
  ["mssql", "MS SQL Server"], ["oracle", "Oracle"], ["wms", "WMS/WMTS"], ["vtiles", "Vector Tiles"],
  ["xyz", "XYZ Tiles", 1], ["wcs", "WCS"], ["wfs", "WFS / OGC API - Features"],
  ["arcgis", "ArcGIS REST Servers"], ["geonode", "GeoNode"],
];
const layers = [
  { n: "点", k: "dot", c: "#a2634d", on: true },
  { n: "菱形", k: "fill", c: "#e77148", on: true },
  { n: "グリッド", k: "line", c: "#c9bda0", chip: true },
  { n: "グリッド", k: "fill", c: "#e5b636", chip: true },
  { n: "六角形", k: "fill", c: "#bdcf50", on: true },
  { n: "長方形", k: "fill", c: "#ff9e17", on: true },
  { n: "グリッド", k: "fill", c: "#a5705b", chip: true },
  { n: "グリッド", k: "dot", c: "#6f7f87", chip: true },
  { n: "ライン", k: "line", c: "#8fb08a", sel: true },
  { n: "地理院地図", k: "raster", open: true },
];

export default function App() {
  return (
    <Window>
      <Global />
      <TitleBar>
        <Icon name="qgis" size={9} />
        <Title>*無題のプロジェクト — QGIS</Title>
        <WindowButtons>
          <BareButton type="button" aria-label="minimize"><Icon name="winMin" size={7} /></BareButton>
          <BareButton type="button" aria-label="restore"><Icon name="winMax" size={7} /></BareButton>
          <BareButton type="button" aria-label="close"><Icon name="winClose" size={7} /></BareButton>
        </WindowButtons>
      </TitleBar>
      <MenuBar>
        {menus.map(([t, k]) => <MenuItem key={t} type="button">{t}(<u>{k}</u>)</MenuItem>)}
      </MenuBar>
      <ToolBar>
        <Handle />
        <Tools width={106} items={["new", "open", "save", "layoutNew", "layouts", "style"]} />
        <Handle />
        <Tools width={282} items={["hand", "panSel", "zoomIn", "zoomOut", "zoomFull", "zoomSel", "zoomLayer", "zoomNative", "zoomLast", "zoomNext", "mapView", "map3d", "bookmarkNew", "bookmarks", "clock", "refresh"]} />
        <Handle />
        <Tools width={90} items={["select+", "selectValue+", "deselect+", "selectLoc"]} />
        <Handle />
        <Tools width={160} items={["identify", "calc", "gear", "sigma", "table+", "measure+", "tips", "action+"]} />
      </ToolBar>
      <ToolBar>
        <Handle />
        <Tools width={124} items={["source", "gpkg", "shp", "spatial", "memory", "mesh", "virtual"]} />
        <Handle />
        <Tools width={242} items={["edits", "edit", "saveEdit", "line+", "addFeat", "vertex+", "attrs", "trash", "cut", "copy", "paste", "undo", "redo"]} />
        <Handle />
        <Tools width={35} items={["label", "diagram"]} />
        <Divider />
        <Tools width={35} items={["labelPin", "labelRed"]} />
        <Divider />
        <Tools width={88} items={["pl1", "pl2", "pl3", "pl4", "pl5"]} />
        <Handle />
        <Tools width={18} items={["metasearch"]} />
        <Handle />
        <Tools width={18} items={["python"]} />
        <Handle />
        <Tools width={18} items={["help"]} />
        <Handle />
      </ToolBar>

      <Workspace>
        <Dock>
          <Panel $grow={226}>
            <Header title="ブラウザ" />
            <PanelTools>
              {["addLayer", "refresh", "funnel", "collapse", "info"].map((n) => <SmallTool key={n} name={n} />)}
            </PanelTools>
            <Box>
              <TreeList $h={163}>
                {browser.map(([icon, name, kids]) => (
                  <BrowserRow key={name}>
                    <Twist $show={kids} />
                    <Icon name={icon} size={9} />
                    <span>{name}</span>
                  </BrowserRow>
                ))}
              </TreeList>
            </Box>
          </Panel>
          <Panel $grow={243} $top={2}>
            <Header title="レイヤ" />
            <PanelTools>
              {["brush", "addGroup", "eye", "funnel", "expr"].map((n) => <SmallTool key={n} name={n} />)}
              <Caret $pale />
              {["expand", "collapse", "remove"].map((n) => <SmallTool key={n} name={n} />)}
            </PanelTools>
            <Box>
              <TreeList $h={96} $top={1}>
                {layers.map((l, i) => (
                  <LayerRow key={i}>
                    <Twist $show={l.open} $open />
                    <Tick type="checkbox" id={`layer-${i}`} defaultChecked={l.on} />
                    {l.k === "raster" ? <Icon name="raster" size={9} /> : <Swatch $kind={l.k} $c={l.c} />}
                    <LayerLabel htmlFor={`layer-${i}`} $on={l.on} $sel={l.sel}>
                      {l.n}
                      {l.chip && <Chip><Icon name="chip" size={9} /></Chip>}
                    </LayerLabel>
                  </LayerRow>
                ))}
              </TreeList>
            </Box>
          </Panel>
        </Dock>

        <MapView />

        <Dock>
          <Panel $grow={1} $bottom={2}>
            <Header title="地物情報結果" />
            <PanelTools>
              <SmallTool name="form" />
              <Divider $small />
              {["expand", "collapse", "expandNew"].map((n) => <SmallTool key={n} name={n} />)}
              <Divider $small />
              <SmallTool name="clear" />
              <Divider $small />
              {["copy", "printer"].map((n) => <SmallTool key={n} name={n} />)}
              <Divider $small />
              <SmallTool name="idMode" />
              <Caret />
              <SmallTool name="wrench" />
              <Divider $small />
              <SmallTool name="help" />
            </PanelTools>
            <Box>
              <AttrTable>
                <thead><tr><th scope="col">地物</th><th scope="col">値（Value）</th></tr></thead>
              </AttrTable>
            </Box>
            <FormRow>
              <label htmlFor="mode">モード</label>
              <Select id="mode" value="現在のレイヤ" />
            </FormRow>
            <FormRow $pale>
              <label htmlFor="view">ビュー</label>
              <Select id="view" value="ツリー" width={38} disabled />
            </FormRow>
          </Panel>
        </Dock>
      </Workspace>

      <StatusBar>
        <Search>
          <Icon name="magnifier" size={7} />
          <input aria-label="検索" placeholder="検索(Ctrl + K)" />
        </Search>
        <Pair $mr={3}><label htmlFor="coord">座標</label><Field id="coord" $w={62} defaultValue="-31563.86,-73734.56" /></Pair>
        <Pair $mr={6}><Icon name="extents" size={9} /></Pair>
        <Pair $mr={6}><label htmlFor="scale">縮尺</label><Select id="scale" value="1:278" width={42} white /></Pair>
        <Pair $mr={3}><Icon name="lock" size={9} /></Pair>
        <Pair $mr={3}><label htmlFor="zoom">拡大</label><Spin id="zoom" value="100%" /></Pair>
        <Pair $mr={3}><label htmlFor="rot">回転</label><Spin id="rot" value="0.0 °" /></Pair>
        <Pair $mr={6}><Tick type="checkbox" id="render" defaultChecked /><label htmlFor="render">レンダ</label></Pair>
        <Pair $mr={9}><Icon name="crs" size={9} />EPSG:6680</Pair>
        <Icon name="bubble" size={10} />
      </StatusBar>
    </Window>
  );
}
